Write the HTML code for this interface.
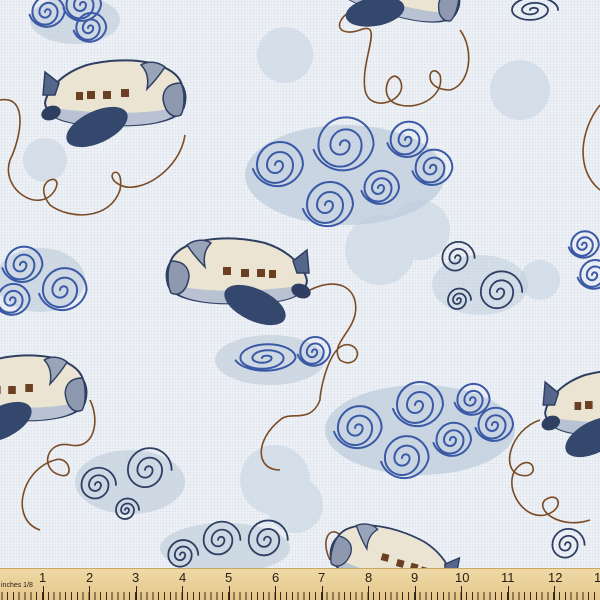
<!DOCTYPE html>
<html><head><meta charset="utf-8"><style>
html,body{margin:0;padding:0;width:600px;height:600px;overflow:hidden;background:#eef1f6}
#w{position:relative;width:600px;height:600px;overflow:hidden;background:#eef1f6;background-image:radial-gradient(#dfe4ec 0.8px,transparent 1px);background-size:3px 3px}
svg{position:absolute;left:0;top:0}
#ruler{position:absolute;left:0;top:568px;width:600px;height:32px;box-sizing:border-box;background:linear-gradient(#efd9a6,#e4c68a);border-top:1px solid #c9a865}
#ticks{position:absolute;left:0;bottom:0;width:600px;height:8px;background:repeating-linear-gradient(90deg,transparent 0,transparent 4.8px,#3a2d1c 4.8px,#3a2d1c 5.81px);background-position:-3.5px 0}
.n{position:absolute;top:1px;font:13px "Liberation Sans",sans-serif;color:#2a2015}
.m{position:absolute;bottom:0;width:1px;height:14px;background:#2a2015}
#lab{position:absolute;left:1px;top:13px;font:7px "Liberation Sans",sans-serif;color:#2a2015}
</style></head><body><div id="w">
<svg width="600" height="568" viewBox="0 0 600 568">
<defs>
<path id="s" d="M0,0 a2,2 0 0 1 4,0 a4,4 0 0 1 -8,0 a6.5,6.5 0 0 1 13,0 a9,9 0 0 1 -18,0 a11.5,11.5 0 0 1 23,0 a13,13 0 0 1 -25,2" fill="none" stroke="#3b5aa6" stroke-width="2" vector-effect="non-scaling-stroke" stroke-linecap="round"/>
<path id="sd" d="M0,0 a2,2 0 0 1 4,0 a4,4 0 0 1 -8,0 a6.5,6.5 0 0 1 13,0 a9,9 0 0 1 -18,0 a11.5,11.5 0 0 1 23,0" fill="none" stroke="#2f3f63" stroke-width="1.8" vector-effect="non-scaling-stroke" stroke-linecap="round"/>
<g id="p">
<path d="M5,30 C12,6 60,0 100,10 C125,18 140,35 142,48 C140,64 120,70 80,70 C40,72 8,66 3,52 C0,42 2,35 5,30Z" fill="#ebe4d2" stroke="#2e3f62" stroke-width="2"/>
<path d="M4,50 C30,60 90,60 140,52 C136,64 120,70 80,70 C40,72 8,66 4,50Z" fill="#b9c2d2"/>
<path d="M6,28 C2,36 2,52 6,60 C14,64 22,58 24,44 C24,34 18,28 6,28Z" fill="#8e99b0" stroke="#2e3f62" stroke-width="1.5"/>
<path d="M22,12 C30,6 40,6 46,10 C40,16 38,24 40,34 C32,26 26,18 22,12Z" fill="#9aa4b8" stroke="#2e3f62" stroke-width="1.5"/>
<path d="M128,28 L142,17 L144,40 L132,40Z" fill="#56668a" stroke="#2e3f62" stroke-width="1.5"/>
<rect x="58" y="34" width="8" height="8" fill="#6b3f22"/><rect x="76" y="36" width="8" height="8" fill="#6b3f22"/><rect x="92" y="36" width="8" height="8" fill="#6b3f22"/><rect x="104" y="37" width="7" height="8" fill="#6b3f22"/>
<ellipse cx="90" cy="72" rx="33" ry="16" transform="rotate(25 90 72)" fill="#34476d"/>
<ellipse cx="136" cy="58" rx="10" ry="7" transform="rotate(20 136 58)" fill="#2e3f62"/>
</g>
</defs>
<g fill="#cfdbe6" opacity="0.8">
<circle cx="285" cy="55" r="28"/><circle cx="520" cy="90" r="30"/><circle cx="45" cy="160" r="22"/><circle cx="380" cy="250" r="35"/><circle cx="420" cy="230" r="30"/><circle cx="275" cy="480" r="35"/><circle cx="295" cy="505" r="28"/><circle cx="540" cy="280" r="20"/>
</g>
<g fill="none" stroke="#7a4b24" stroke-width="1.6">
<path d="M380,0 C330,10 330,40 360,30 C385,20 360,60 365,90 C370,115 410,100 400,80 C390,65 375,100 400,105 C420,110 445,95 440,75 C430,60 420,90 450,90 C470,85 475,50 460,30"/>
<path d="M0,100 C30,95 20,140 10,160 C0,190 40,215 55,190 C65,170 30,180 50,205 C70,220 110,220 120,190 C125,160 100,175 120,185 C140,195 180,170 185,135"/>
<path d="M310,290 C340,275 360,290 355,315 C350,335 330,345 340,360 C355,370 365,350 350,345 C330,340 320,390 320,400 C310,425 290,410 280,420 C255,440 255,470 280,470"/>
<path d="M90,400 C100,420 95,450 70,445 C45,440 40,470 60,475 C75,480 70,455 55,460 C20,470 10,520 40,530"/>
<path d="M540,420 C510,430 500,470 520,475 C540,480 535,455 520,465 C500,480 520,520 545,515 C565,510 560,490 545,500 C535,510 560,530 590,520"/>
<path d="M600,105 C580,130 575,170 600,190"/>
<path d="M330,560 C320,540 330,525 340,535"/>
</g>
<g>
<ellipse cx="345" cy="175" rx="100" ry="50" fill="#bccbdb" opacity="0.7"/>
<use href="#s" transform="translate(275,165) scale(2)"/><use href="#s" transform="translate(340,145) scale(2.4)"/><use href="#s" transform="translate(405,140) scale(1.6)"/><use href="#s" transform="translate(430,168) scale(1.6)"/><use href="#s" transform="translate(378,188) scale(1.5)"/><use href="#s" transform="translate(325,205) scale(2)"/>
<ellipse cx="420" cy="430" rx="95" ry="45" fill="#bccbdb" opacity="0.7"/>
<use href="#s" transform="translate(355,428) scale(1.9)"/><use href="#s" transform="translate(415,405) scale(2)"/><use href="#s" transform="translate(470,400) scale(1.4)"/><use href="#s" transform="translate(492,425) scale(1.5)"/><use href="#s" transform="translate(450,440) scale(1.5)"/><use href="#s" transform="translate(402,458) scale(1.9)"/>
<ellipse cx="40" cy="280" rx="45" ry="32" fill="#bccbdb" opacity="0.6"/>
<use href="#s" transform="translate(20,265) scale(1.6)"/><use href="#s" transform="translate(60,290) scale(1.9)"/><use href="#s" transform="translate(10,300) scale(1.4)"/>
<use href="#s" transform="translate(582,245) scale(1.2)"/><use href="#s" transform="translate(592,275) scale(1.3)"/>
<ellipse cx="75" cy="20" rx="45" ry="24" fill="#bccbdb" opacity="0.6"/>
<use href="#s" transform="translate(45,12) scale(1.4)"/><use href="#s" transform="translate(80,5) scale(1.5)"/><use href="#s" transform="translate(88,28) scale(1.3)"/>
<ellipse cx="270" cy="360" rx="55" ry="25" fill="#bccbdb" opacity="0.6"/>
<use href="#s" transform="translate(262,358) scale(2.4,1.2)"/><use href="#s" transform="translate(312,352) scale(1.3)"/>
<ellipse cx="480" cy="285" rx="48" ry="30" fill="#bccbdb" opacity="0.5"/>
<use href="#sd" transform="translate(455,258) scale(1.4)"/><use href="#sd" transform="translate(497,292) scale(1.8)"/><use href="#sd" transform="translate(457,300) scale(1)"/>
<ellipse cx="130" cy="482" rx="55" ry="32" fill="#bccbdb" opacity="0.6"/>
<use href="#sd" transform="translate(95,485) scale(1.5)"/><use href="#sd" transform="translate(145,470) scale(1.9)"/><use href="#sd" transform="translate(125,510) scale(1)"/>
<ellipse cx="225" cy="548" rx="65" ry="25" fill="#bccbdb" opacity="0.6"/>
<use href="#sd" transform="translate(180,555) scale(1.3)"/><use href="#sd" transform="translate(218,540) scale(1.6)"/><use href="#sd" transform="translate(264,540) scale(1.7)"/>
<use href="#sd" transform="translate(530,10) scale(2,1.1)"/>
<use href="#sd" transform="translate(565,545) scale(1.4)"/>
</g>
<use href="#p" transform="translate(165,233)"/>
<use href="#p" transform="translate(187,55) scale(-1,1)"/>
<use href="#p" transform="translate(88,350) scale(-0.95,1)"/>
<use href="#p" transform="translate(680,365) scale(-0.95,1)"/>
<use href="#p" transform="translate(470,-30) scale(-0.9,0.9) rotate(-15)"/>
<use href="#p" transform="translate(340,510) scale(0.9) rotate(15)"/>
</svg>
<div id="ruler"><div id="ticks"></div>
<div class="n" style="left:39px">1</div><div class="n" style="left:86px">2</div><div class="n" style="left:132px">3</div><div class="n" style="left:179px">4</div><div class="n" style="left:225px">5</div><div class="n" style="left:272px">6</div><div class="n" style="left:318px">7</div><div class="n" style="left:365px">8</div><div class="n" style="left:411px">9</div><div class="n" style="left:455px">10</div><div class="n" style="left:501px">11</div><div class="n" style="left:548px">12</div><div class="n" style="left:594px">1</div>
<div class="m" style="left:43px"></div><div class="m" style="left:89px"></div><div class="m" style="left:136px"></div><div class="m" style="left:182px"></div><div class="m" style="left:229px"></div><div class="m" style="left:275px"></div><div class="m" style="left:322px"></div><div class="m" style="left:368px"></div><div class="m" style="left:415px"></div><div class="m" style="left:461px"></div><div class="m" style="left:508px"></div><div class="m" style="left:554px"></div>
<div id="lab">inches 1/8</div></div>
</div></body></html>
